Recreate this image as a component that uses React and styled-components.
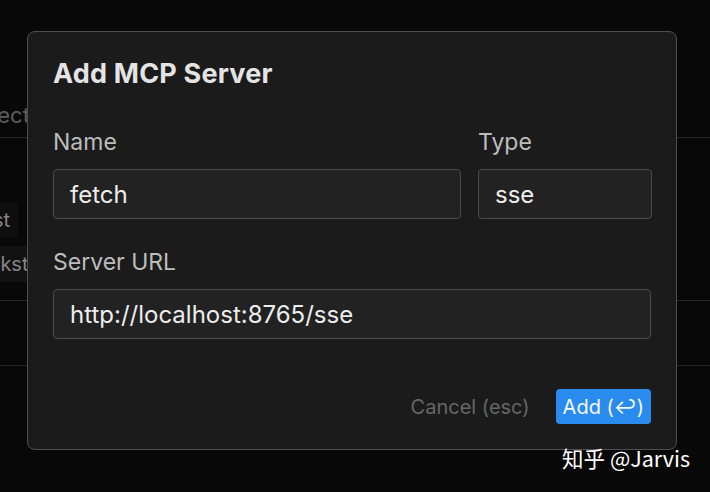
import React from 'react';
import styled, { createGlobalStyle } from 'styled-components';

const GlobalStyle = createGlobalStyle`
  html, body {
    margin: 0;
    padding: 0;
    background: #080808;
    width: 710px;
    height: 492px;
    overflow: hidden;
    font-family: Inter, 'Noto Sans', sans-serif;
  }
`;

const Page = styled.div`
  position: relative;
  width: 710px;
  height: 492px;
  background: #080808;
  overflow: hidden;
`;

// the list view behind the modal
const Backdrop = styled.div`
  display: flex;
  flex-direction: column;
  padding-top: 92px;
`;

const HeaderRow = styled.div`
  height: 45px;
  display: flex;
  align-items: center;
  margin-left: -58px;
  font-size: 22px;
  color: #5c5c5c;
  border-bottom: 1px solid #262626;
`;

const ListRow = styled.div`
  height: ${p => p.h}px;
  box-sizing: border-box;
  padding-top: 64px;
  display: flex;
  flex-direction: column;
  gap: 8px;
  border-bottom: 1px solid #262626;
`;

const Chip = styled.span`
  align-self: flex-start;
  margin-left: ${p => p.shift}px;
  padding: 5px 8px;
  border-radius: 3px;
  background: ${p => (p.dim ? '#121212' : '#0e0e0e')};
  color: #858585;
  font-size: 20px;
  line-height: 26px;
  white-space: nowrap;
`;

const Dialog = styled.div`
  position: absolute;
  left: 27px;
  top: 31px;
  width: 650px;
  height: 419px;
  box-sizing: border-box;
  padding: 25px;
  background: #1b1b1b;
  border: 1.5px solid #4e4e4e;
  border-radius: 8px;
  display: flex;
  flex-direction: column;
`;

const Title = styled.h2`
  margin: 0;
  font-size: 27px;
  line-height: 34px;
  font-weight: 700;
  color: #e4e4e4;
  letter-spacing: 0.2px;
`;

const FieldGrid = styled.div`
  display: grid;
  grid-template-columns: ${p => p.cols};
  column-gap: 17px;
  margin-top: ${p => p.mt}px;
`;

const Field = styled.div`
  display: flex;
  flex-direction: column;
  gap: 13px;
`;

const Label = styled.label`
  font-size: 23px;
  line-height: 27px;
  color: #bdbdbd;
`;

const Input = styled.div`
  height: 50px;
  box-sizing: border-box;
  display: flex;
  align-items: center;
  padding: 0 16px;
  background: #222222;
  border: 1.5px solid #4a4a4a;
  border-radius: 4px;
  font-size: 24px;
  color: #ededed;
`;

const Actions = styled.div`
  margin-top: auto;
  display: flex;
  justify-content: flex-end;
  align-items: center;
  gap: 26px;
`;

const GhostButton = styled.button`
  border: none;
  background: none;
  padding: 0;
  font-family: inherit;
  font-size: 20px;
  color: #666666;
`;

const PrimaryButton = styled.button`
  height: 35px;
  padding: 0 7px;
  border: none;
  border-radius: 4px;
  background: #2a8bef;
  color: #f4f8ff;
  font-family: inherit;
  font-size: 20px;
  display: flex;
  align-items: center;
`;

const Watermark = styled.div`
  position: absolute;
  right: 20px;
  bottom: 19px;
  font-family: 'Noto Sans CJK SC', Inter, sans-serif;
  font-size: 21.5px;
  color: #ffffff;
`;

export default function App() {
  return (
    <Page>
      <GlobalStyle />
      <Backdrop>
        <HeaderRow>Connect</HeaderRow>
        <ListRow h={163}>
          <Chip shift={-38}>Test</Chip>
          <Chip shift={-51} dim>Quickstart</Chip>
        </ListRow>
        <ListRow h={62} />
      </Backdrop>

      <Dialog>
        <Title>Add MCP Server</Title>
        <FieldGrid cols="408px 174px" mt={38}>
          <Field>
            <Label>Name</Label>
            <Input>fetch</Input>
          </Field>
          <Field>
            <Label>Type</Label>
            <Input>sse</Input>
          </Field>
        </FieldGrid>
        <FieldGrid cols="1fr" mt={30}>
          <Field>
            <Label>Server URL</Label>
            <Input>http://localhost:8765/sse</Input>
          </Field>
        </FieldGrid>
        <Actions>
          <GhostButton>Cancel (esc)</GhostButton>
          <PrimaryButton>Add (↩)</PrimaryButton>
        </Actions>
      </Dialog>

      <Watermark>知乎 @Jarvis</Watermark>
    </Page>
  );
}
